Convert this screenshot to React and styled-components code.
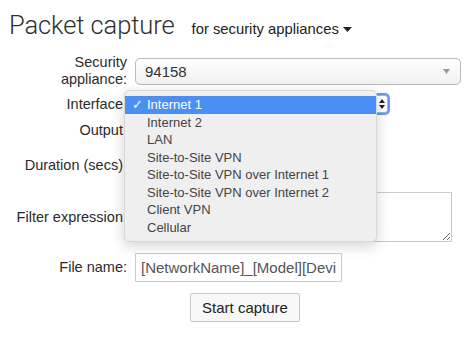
import React from "react";
import styled, { createGlobalStyle } from "styled-components";

const Global = createGlobalStyle`
  html, body { margin: 0; padding: 0; background: #fff; }
  body { font-family: "Liberation Sans", Arial, sans-serif; color: #2b2b2b; }
`;

const Page = styled.div`
  position: relative;
  width: 474px;
  height: 353px;
  overflow: hidden;
`;

const Header = styled.div`
  display: flex;
  align-items: baseline;
  padding: 10px 0 0 9px;
  height: 42px;
  box-sizing: border-box;
`;

const Title = styled.h1`
  margin: 0;
  font-family: Roboto, "Liberation Sans", sans-serif;
  font-weight: 300;
  font-size: 25.5px;
  color: #2e2e2e;
  letter-spacing: -0.1px;
`;

const Scope = styled.span`
  margin-left: 17px;
  font-size: 14.8px;
  color: #222;
  display: inline-flex;
  align-items: center;
  gap: 4px;
`;

const Form = styled.div`
  display: flex;
  flex-direction: column;
`;

const Row = styled.div`
  display: grid;
  grid-template-columns: 127px 326px;
  column-gap: 8px;
  align-items: center;
  height: ${(p) => p.$h}px;
  margin-top: ${(p) => p.$mt}px;
`;

const Label = styled.label`
  text-align: right;
  font-size: 14.5px;
  line-height: 17px;
  color: #2b2b2b;
`;

const SelectBox = styled.div`
  height: 27px;
  box-sizing: border-box;
  border: 1px solid #b9b9b9;
  border-radius: 5px;
  background: linear-gradient(#ffffff, #f1f1f1);
  display: flex;
  align-items: center;
  justify-content: space-between;
  padding: 0 10px 0 9px;
  font-size: 15px;
  color: #333;
`;

const SmallSelect = styled.div`
  width: ${(p) => p.$w}px;
  height: 18px;
  box-sizing: border-box;
  border: 1px solid #9bb6e4;
  border-radius: 3px;
  background: #fff;
  display: flex;
  align-items: center;
  justify-content: flex-end;
  padding-right: 2px;
  box-shadow: ${(p) => (p.$focus ? "0 0 0 2px #6b9ae8" : "none")};
`;

const Area = styled.textarea`
  width: 317px;
  height: 50px;
  box-sizing: border-box;
  border: 1px solid #c9c9c9;
  border-radius: 0;
  margin: 0;
  font: inherit;
`;

const TextInput = styled.input`
  width: 207px;
  height: 29px;
  box-sizing: border-box;
  border: 1px solid #cbcbcb;
  border-radius: 1px;
  padding: 0 5px;
  font-family: "Liberation Sans", Arial, sans-serif;
  font-size: 15px;
  color: #555;
  outline: none;
`;

const ButtonRow = styled.div`
  display: flex;
  padding-left: 190px;
  margin-top: 11px;
`;

const Button = styled.button`
  width: 110px;
  height: 29px;
  border: 1px solid #c8c8c8;
  border-radius: 2px;
  background: #f8f8f8;
  font-family: "Liberation Sans", Arial, sans-serif;
  font-size: 15px;
  color: #222;
  padding: 0;
`;

const Menu = styled.ul`
  position: absolute;
  left: 124px;
  top: 90px;
  width: 253px;
  margin: 0;
  padding: 5px 0 5px;
  list-style: none;
  background: #efefef;
  border: 1px solid #d8d8d8;
  border-radius: 5px;
  box-sizing: border-box;
  box-shadow: 0 4px 14px rgba(0, 0, 0, 0.18);
`;

const Item = styled.li`
  position: relative;
  height: 17.5px;
  line-height: 17.5px;
  padding-left: 22px;
  font-size: 13px;
  color: ${(p) => (p.$active ? "#fff" : "#444")};
  background: ${(p) => (p.$active ? "#4c8ff2" : "transparent")};
`;

const Check = styled.span`
  position: absolute;
  left: 7px;
  top: 0;
  font-family: "DejaVu Sans", sans-serif;
  font-size: 13px;
`;

const items = [
  "Internet 1",
  "Internet 2",
  "LAN",
  "Site-to-Site VPN",
  "Site-to-Site VPN over Internet 1",
  "Site-to-Site VPN over Internet 2",
  "Client VPN",
  "Cellular",
];

function Spin() {
  return (
    <svg width="6" height="10" viewBox="0 0 6 10">
      <path d="M0 4 L3 0 L6 4 Z M0 6 L3 10 L6 6 Z" fill="#222" />
    </svg>
  );
}

export default function App() {
  return (
    <Page>
      <Global />
      <Header>
        <Title>Packet capture</Title>
        <Scope>
          for security appliances
          <svg width="9" height="5" viewBox="0 0 9 5">
            <path d="M0 0 L9 0 L4.5 5 Z" fill="#222" />
          </svg>
        </Scope>
      </Header>
      <Form>
        <Row $h={36} $mt={11}>
          <Label>
            Security
            <br />
            appliance:
          </Label>
          <SelectBox>
            94158
            <svg width="7" height="5" viewBox="0 0 7 5">
              <path d="M0 0 L7 0 L3.5 5 Z" fill="#999" />
            </svg>
          </SelectBox>
        </Row>
        <Row $h={18} $mt={6}>
          <Label>Interface:</Label>
          <SmallSelect $w={253} $focus>
            <Spin />
          </SmallSelect>
        </Row>
        <Row $h={18} $mt={8}>
          <Label>Output:</Label>
          <SmallSelect $w={120} />
        </Row>
        <Row $h={18} $mt={17}>
          <Label>Duration (secs):</Label>
          <SmallSelect $w={80} />
        </Row>
        <Row $h={50} $mt={18}>
          <Label>Filter expression:</Label>
          <Area />
        </Row>
        <Row $h={29} $mt={11}>
          <Label>File name:</Label>
          <TextInput readOnly value="[NetworkName]_[Model][DeviceName]" />
        </Row>
        <ButtonRow>
          <Button>Start capture</Button>
        </ButtonRow>
      </Form>
      <Menu>
        {items.map((t, i) => (
          <Item key={t} $active={i === 0}>
            {i === 0 && <Check>✓</Check>}
            {t}
          </Item>
        ))}
      </Menu>
    </Page>
  );
}
